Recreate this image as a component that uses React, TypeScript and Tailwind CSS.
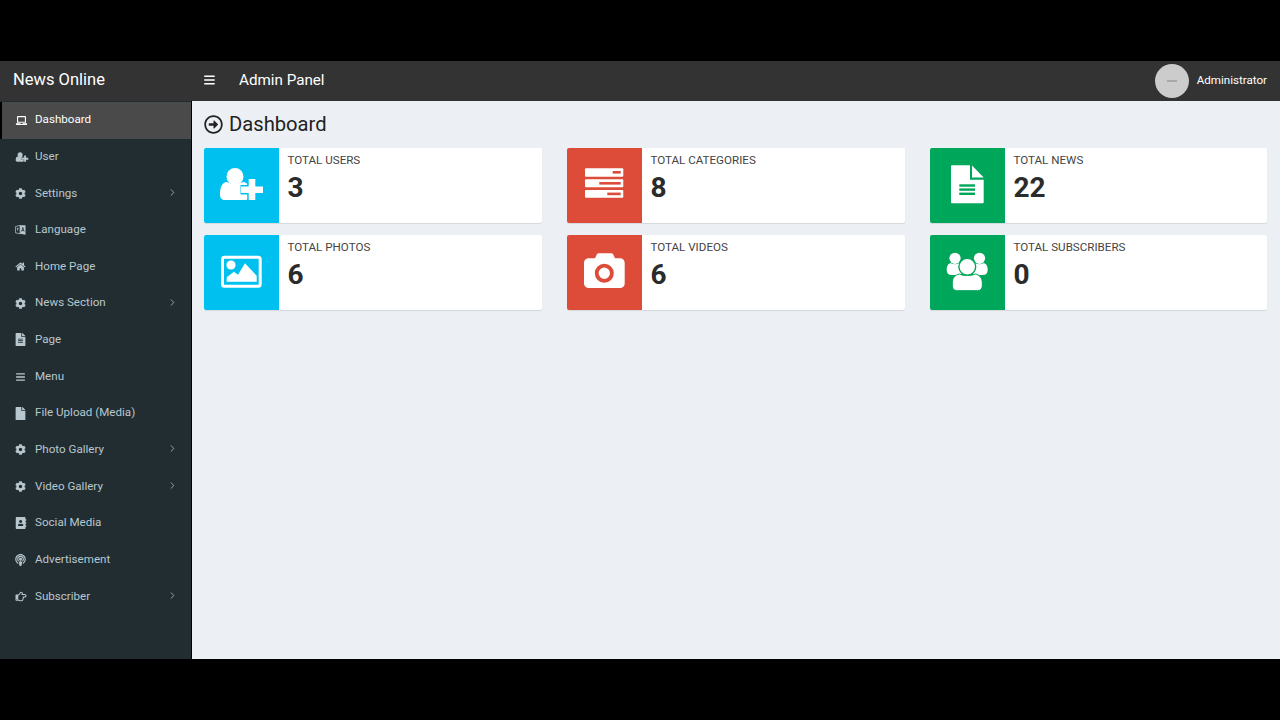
import React from "react";
import { ChevronRight } from "lucide-react";
import {
  FaAddressBook,
  FaBars,
  FaCog,
  FaFile,
  FaFileAlt,
  FaHome,
  FaLaptop,
  FaPodcast,
  FaRegArrowAltCircleRight,
  FaRegHandPointRight,
} from "react-icons/fa";

const BLUE = "#00c0ef";
const RED = "#dd4b39";
const GREEN = "#00a65a";
const SIDE = "#222d32";

// font awesome 4 shapes, the packaged ones are the v5 drawings
const UserPlusShape = ({ bg }: { bg: string }) => (
  <>
    <circle cx="31" cy="28.5" r="8.5" fill="currentColor" />
    <path d="M16 47c0-8 2-12.5 7-13 3 2 13 2 16 0 5 .5 7 5 7 13 0 3-2 5-5 5H21c-3 0-5-2-5-5z" fill="currentColor" />
    <path d="M36.5 41.7h23M48 30.5v22" stroke={bg} strokeWidth="9.6" />
    <path d="M37 41.7h22M48 31v21" stroke="currentColor" strokeWidth="6.6" />
  </>
);

const UserPlusCard = () => (
  <svg viewBox="0 0 75 75" className="h-[75px] w-[75px] text-white">
    <UserPlusShape bg={BLUE} />
  </svg>
);

const UserPlusSide = ({ className }: { className?: string }) => (
  <svg viewBox="15 19 45 34" className={className}>
    <UserPlusShape bg={SIDE} />
  </svg>
);

const TasksCard = () => (
  <svg viewBox="0 0 75 75" className="h-[75px] w-[75px]">
    <rect x="18" y="20.3" width="38.3" height="8.4" rx="1" fill="white" />
    <rect x="18" y="31.3" width="38.3" height="8" rx="1" fill="white" />
    <rect x="18" y="42" width="38.3" height="7.8" rx="1" fill="white" />
    <rect x="45.7" y="23" width="8" height="2.6" fill={RED} />
    <rect x="32.3" y="34" width="21.4" height="2.6" fill={RED} />
    <rect x="40.3" y="44.6" width="13.4" height="2.6" fill={RED} />
  </svg>
);

const FileCard = () => (
  <svg viewBox="0 0 75 75" className="h-[75px] w-[75px]">
    <path d="M21 18.3a1 1 0 0 1 1-1h18v14.4h13.7v22.6a1 1 0 0 1-1 1H22a1 1 0 0 1-1-1z" fill="white" />
    <path d="M42 17.6l11.7 11.8H42z" fill="white" />
    <rect x="29.3" y="36.3" width="15.7" height="2.4" fill={GREEN} />
    <rect x="29.3" y="40.4" width="15.7" height="2.4" fill={GREEN} />
    <rect x="29.3" y="44.6" width="15.7" height="2.4" fill={GREEN} />
  </svg>
);

const PictureCard = () => (
  <svg viewBox="0 0 75 75" className="h-[75px] w-[75px]">
    <rect x="18.5" y="22.2" width="37.7" height="29" rx="2" fill="none" stroke="white" strokeWidth="3" />
    <circle cx="27" cy="30" r="4.6" fill="white" />
    <path d="M22.7 46.7v-4.5l7.3-5.5 4 3 7-11.4 11.7 12.5v5.9z" fill="white" />
  </svg>
);

const CameraCard = () => (
  <svg viewBox="0 0 75 75" className="h-[75px] w-[75px]">
    <path
      d="M22 23.3h6l1.5-3.4c.5-1 1.2-1.6 2.4-1.6h12.2c1.2 0 1.9.6 2.4 1.6l1.5 3.4h4.9c2.8 0 4.8 2 4.8 4.8v20.1c0 2.8-2 4.8-4.8 4.8H22c-2.8 0-5-2-5-4.8V28.1c0-2.8 2.2-4.8 5-4.8z"
      fill="white"
    />
    <circle cx="37.3" cy="38.3" r="7.6" fill="none" stroke={RED} strokeWidth="3.8" />
  </svg>
);

const UsersCard = () => (
  <svg viewBox="0 0 75 75" className="h-[75px] w-[75px]">
    <circle cx="25" cy="23.3" r="5.6" fill="white" />
    <circle cx="49.5" cy="23.3" r="5.6" fill="white" />
    <path d="M16.7 35c0-4 1.6-6.7 4.3-6.7 2.4 1.4 5.6 1.4 8 0 3 0 5 2 5 6 0 4-3 5.7-6 5.7h-6.5c-3 0-4.8-2-4.8-5z" fill="white" />
    <path d="M57.7 35c0-4-1.6-6.7-4.3-6.7-2.4 1.4-5.6 1.4-8 0-3 0-5 2-5 6 0 4 3 5.7 6 5.7h6.5c3 0 4.8-2 4.8-5z" fill="white" />
    <circle cx="37.3" cy="31.7" r="8.4" fill="white" stroke={GREEN} strokeWidth="1.4" />
    <path
      d="M22.3 48c0-5 2.5-8 7-9 4.5 2 11.5 2 16 0 4.5 1 7 4 7 9v3c0 3-2 4.7-5 4.7H27.3c-3 0-5-1.7-5-4.7z"
      fill="white"
      stroke={GREEN}
      strokeWidth="1"
    />
  </svg>
);

const LanguageSide = ({ className }: { className?: string }) => (
  <svg viewBox="0 0 13 13" className={className}>
    <path d="M.5 2.5L6 1v10l-5.5-1.2z" fill="none" stroke="currentColor" strokeWidth="0.9" />
    <path d="M2 5h2.6M3 3.8v3.6" stroke="currentColor" strokeWidth="0.8" />
    <path d="M6 .8h6.4v11.4L6 11z" fill="currentColor" />
    <path d="M7.8 8.4l1.5-5 1.5 5M8.3 7h2" fill="none" stroke={SIDE} strokeWidth="0.9" />
  </svg>
);

const menu = [
  { label: "Dashboard", icon: FaLaptop, size: "h-[9px] w-[13px]", active: true },
  { label: "User", icon: UserPlusSide, size: "h-[10px] w-[14px]" },
  { label: "Settings", icon: FaCog, size: "h-[11px] w-[11px]", arrow: true },
  { label: "Language", icon: LanguageSide, size: "h-[12px] w-[11px]" },
  { label: "Home Page", icon: FaHome, size: "h-[9px] w-[11px]" },
  { label: "News Section", icon: FaCog, size: "h-[11px] w-[11px]", arrow: true },
  { label: "Page", icon: FaFileAlt, size: "h-[13px] w-[11px]" },
  { label: "Menu", icon: FaBars, size: "h-[10px] w-[11px]" },
  { label: "File Upload (Media)", icon: FaFile, size: "h-[13px] w-[11px]" },
  { label: "Photo Gallery", icon: FaCog, size: "h-[11px] w-[11px]", arrow: true },
  { label: "Video Gallery", icon: FaCog, size: "h-[11px] w-[11px]", arrow: true },
  { label: "Social Media", icon: FaAddressBook, size: "h-[12px] w-[12px]" },
  { label: "Advertisement", icon: FaPodcast, size: "h-[12px] w-[11px]" },
  { label: "Subscriber", icon: FaRegHandPointRight, size: "h-[11px] w-[12px]", arrow: true },
];

const cards = [
  { label: "TOTAL USERS", value: "3", icon: UserPlusCard, color: "bg-[#00c0ef]" },
  { label: "TOTAL CATEGORIES", value: "8", icon: TasksCard, color: "bg-[#dd4b39]" },
  { label: "TOTAL NEWS", value: "22", icon: FileCard, color: "bg-[#00a65a]" },
  { label: "TOTAL PHOTOS", value: "6", icon: PictureCard, color: "bg-[#00c0ef]" },
  { label: "TOTAL VIDEOS", value: "6", icon: CameraCard, color: "bg-[#dd4b39]" },
  { label: "TOTAL SUBSCRIBERS", value: "0", icon: UsersCard, color: "bg-[#00a65a]" },
];

const Sidebar = () => (
  <aside className="w-[192px] shrink-0 border-r border-black bg-[#222d32] pt-px">
    {menu.map(item => (
      <div
        key={item.label}
        className={
          item.active
            ? "flex h-[36.65px] items-center border-l-2 border-black bg-[#4a4a4a] pb-[0.5px] pl-[13px] pr-[13px] text-[#ffffff]"
            : "flex h-[36.65px] items-center border-l-2 border-[#222d32] pb-[0.5px] pl-[13px] pr-[13px] text-[#b8c7ce]"
        }
      >
        <span className="flex w-[20px] shrink-0 items-center">
          <item.icon className={item.size} />
        </span>
        <span className="flex-1 text-[11.6px] leading-none">{item.label}</span>
        {item.arrow && <ChevronRight className="mb-[2px] h-[11px] w-[11px]" strokeWidth={1.6} />}
      </div>
    ))}
  </aside>
);

const InfoBox = ({ card }: { card: (typeof cards)[number] }) => (
  <div className="flex h-[75px] overflow-hidden rounded-[2px] bg-white shadow-[0_1px_1px_rgba(0,0,0,0.1)]">
    <div className={`w-[75px] shrink-0 ${card.color}`}>
      <card.icon />
    </div>
    <div className="pl-[8.5px] pt-[5px]">
      <div className="text-[11.6px] leading-[15px] text-[#444444]">{card.label}</div>
      <div className="mt-[2px] text-[28px] font-bold leading-[36px] text-[#2b2b2b]">{card.value}</div>
    </div>
  </div>
);

export default function App() {
  return (
    <div className="flex h-[720px] w-[1280px] flex-col overflow-hidden bg-black font-['Roboto',sans-serif]">
      <div className="h-[61px] shrink-0" />
      <header className="flex h-[40px] shrink-0 items-center bg-[#333333] text-white">
        <div className="w-[192px] pb-px pl-[13px] text-[16.5px]">News Online</div>
        <FaBars className="mb-[2px] ml-[12px] h-[12px] w-[11px]" />
        <div className="ml-[24px] pb-[2px] text-[15.2px]">Admin Panel</div>
        <div className="ml-auto flex items-center pr-[13px]">
          <div className="flex h-[34px] w-[34px] items-center justify-center rounded-full bg-[#cccccc]">
            <div className="h-[2px] w-[10px] bg-[#a8a8a8]" />
          </div>
          <span className="ml-[8px] text-[11.6px]">Administrator</span>
        </div>
      </header>
      <div className="flex h-[558px] shrink-0">
        <Sidebar />
        <main className="flex-1 bg-[#ecf0f5] pl-[12px] pr-[13px] pt-[11px]">
          <h1 className="flex h-[24px] items-center text-[20.2px] leading-none text-[#222222]">
            <FaRegArrowAltCircleRight className="mr-[6px] h-[19px] w-[19px]" />
            Dashboard
          </h1>
          <div className="mt-[12px] grid grid-cols-[338px_338px_337px] gap-x-[25px] gap-y-[12.4px]">
            {cards.map(card => (
              <InfoBox key={card.label} card={card} />
            ))}
          </div>
        </main>
      </div>
    </div>
  );
}
